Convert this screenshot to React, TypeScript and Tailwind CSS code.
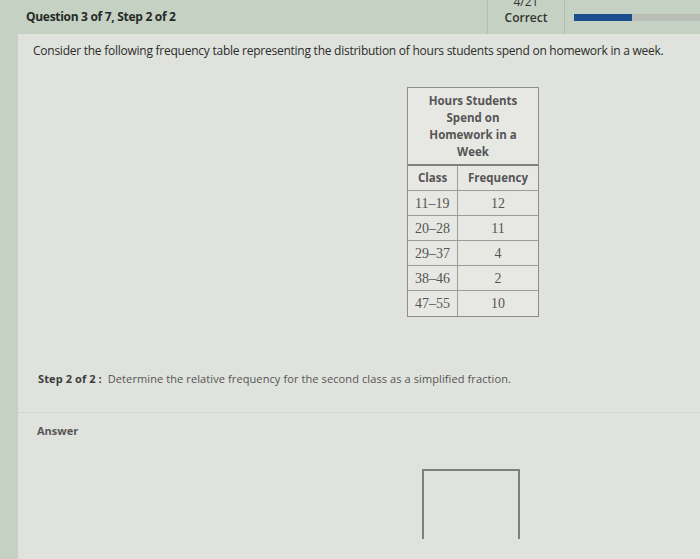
import React from 'react';

const rows = [
  ['11–19', '12'],
  ['20–28', '11'],
  ['29–37', '4'],
  ['38–46', '2'],
  ['47–55', '10'],
];

export default function App() {
  return (
    <div className="w-[700px] h-[559px] overflow-hidden flex flex-col bg-[#c5d1c2] font-['Open_Sans',sans-serif] text-[#262a26]">
      {/* top bar */}
      <div className="h-[34px] flex items-stretch shrink-0">
        <div className="pl-[26px] flex items-center text-[12px] font-bold tracking-[-0.3px] w-[487px]">
          Question 3 of 7, Step 2 of 2
        </div>
        <div className="w-[78px] border-x border-[#b3bdb0] flex flex-col items-center justify-start -mt-[6px] leading-[16px] text-[12px] text-[#333]">
          <span>4/21</span>
          <span className="font-semibold">Correct</span>
        </div>
        <div className="flex-1 flex items-center pl-[9px]">
          <div className="h-[7px] w-[58px] bg-[#1c4d8e]" />
          <div className="h-[7px] flex-1 bg-[#b8beb5]" />
        </div>
      </div>

      {/* main panel */}
      <div className="flex-1 ml-[18px] bg-[#e0e2dd] flex flex-col">
        <p className="mt-[9px] pl-[15px] text-[12px] leading-[16px] tracking-[-0.25px] text-[#2a2d2a]">
          Consider the following frequency table representing the distribution of hours students spend on homework in a week.
        </p>

        <div className="mt-[28px] ml-[389px] w-[132px] border border-[#8a8d89] bg-[#e7e8e4]">
          <div className="h-[78px] flex items-center justify-center text-center text-[11.5px] leading-[17px] font-bold text-[#555] px-1 border-b-2 border-[#7e817d]">
            Hours Students<br />Spend on<br />Homework in a<br />Week
          </div>
          <div className="grid grid-cols-[50px_1fr]">
            <div className="h-[25px] flex items-center justify-center text-[11.5px] font-bold text-[#555] border-r border-b border-[#9a9d99]">Class</div>
            <div className="h-[25px] flex items-center justify-center text-[11.5px] font-bold text-[#555] border-b border-[#9a9d99]">Frequency</div>
            {rows.map(([c, f], i) => (
              <React.Fragment key={c}>
                <div className={`h-[25px] flex items-center pl-[7px] font-['Liberation_Serif',serif] text-[14px] text-[#555] border-r border-[#9a9d99] ${i < rows.length - 1 ? 'border-b' : ''}`}>{c}</div>
                <div className={`h-[25px] flex items-center justify-center font-['Liberation_Serif',serif] text-[14px] text-[#555] border-[#9a9d99] ${i < rows.length - 1 ? 'border-b' : ''}`}>{f}</div>
              </React.Fragment>
            ))}
          </div>
        </div>

        <p className="mt-[55px] pl-[20px] text-[11px] leading-[14px] tracking-[0.1px] text-[#555]">
          <span className="font-bold text-[#3a3d3a]">Step 2 of 2 :</span>&nbsp; Determine the relative frequency for the second class as a simplified fraction.
        </p>

        <div className="mt-[26px] h-px bg-[#d4d7d1]" />

        <div className="mt-[10px] pl-[19px] text-[11px] font-bold text-[#555]">Answer</div>

        <div className="mt-[29px] ml-[404px] w-[98px] h-[70px] border-t-2 border-x-2 border-[#7d807c]" />
      </div>
    </div>
  );
}
